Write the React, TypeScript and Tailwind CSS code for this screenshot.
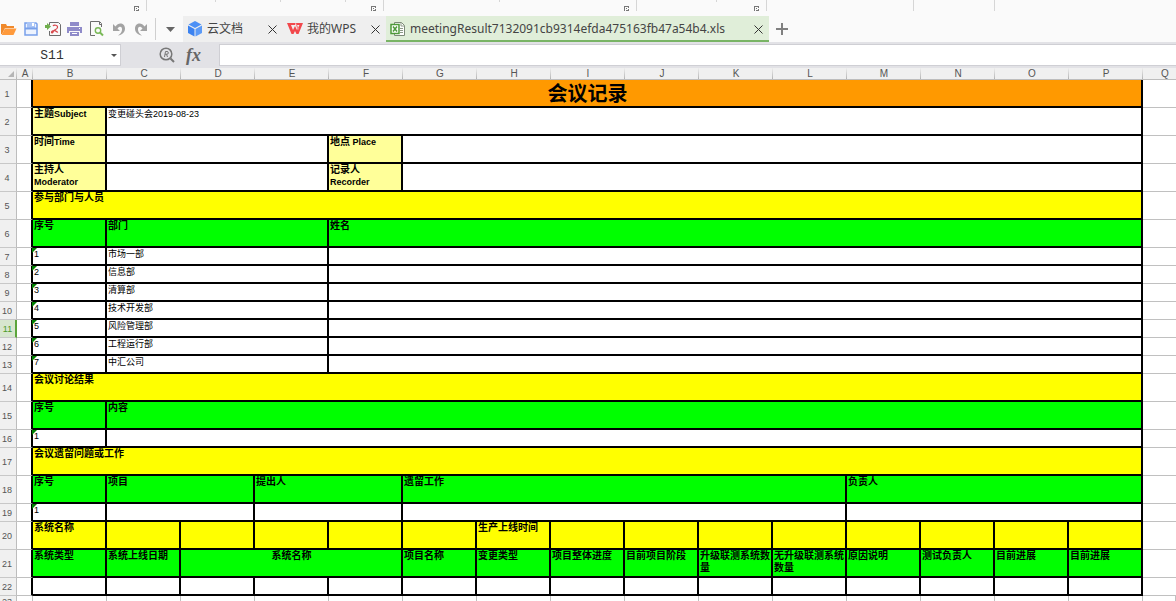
import type { ReactNode } from "react";
import clsx from "clsx";

type Fill = "orange" | "cream" | "yellow" | "green" | "white";

type Cell = {
  span?: number;
  text?: string;
  en?: string;
  fill?: Fill;
  title?: boolean;
  center?: boolean;
  flagged?: boolean;
  stacked?: boolean;
};

type Row = { short?: boolean; cells: Cell[] };

const COLUMNS = "BCDEFGHIJKLMNOP".split("");

const FILLS: Record<Fill, string> = {
  orange: "bg-[#ff9900] font-bold",
  cream: "bg-[#ffff99] font-bold text-[10px]",
  yellow: "bg-[#ffff00] font-bold text-[10px]",
  green: "bg-[#00ff00] font-bold text-[10px]",
  white: "bg-white text-[9px]",
};

const DEPARTMENTS = ["市场一部", "信息部", "清算部", "技术开发部", "风险管理部", "工程运行部", "中汇公司"];

const yellow = (text = ""): Cell => ({ text, fill: "yellow" });
const green = (text: string, span = 1): Cell => ({ text, span, fill: "green" });
const blank = (span = 1): Cell => ({ span });

const ROWS: Row[] = [
  { cells: [{ span: 15, text: "会议记录", fill: "orange", title: true }] },
  { cells: [{ text: "主题", en: "Subject", fill: "cream" }, { span: 14, text: "变更碰头会2019-08-23" }] },
  { cells: [{ text: "时间", en: "Time", fill: "cream" }, blank(3), { text: "地点", en: " Place", fill: "cream" }, blank(10)] },
  {
    cells: [
      { text: "主持人", en: "Moderator", fill: "cream", stacked: true },
      blank(3),
      { text: "记录人", en: "Recorder", fill: "cream", stacked: true },
      blank(10),
    ],
  },
  { cells: [{ span: 15, text: "参与部门与人员", fill: "yellow" }] },
  { cells: [green("序号"), green("部门", 3), green("姓名", 11)] },
  ...DEPARTMENTS.map((name, i) => ({
    short: true,
    cells: [{ text: String(i + 1), flagged: true }, { span: 3, text: name }, blank(11)],
  })),
  { cells: [{ span: 15, text: "会议讨论结果", fill: "yellow" }] },
  { cells: [green("序号"), green("内容", 14)] },
  { short: true, cells: [{ text: "1", flagged: true }, blank(14)] },
  { cells: [{ span: 15, text: "会议遗留问题或工作", fill: "yellow" }] },
  { cells: [green("序号"), green("项目", 2), green("提出人", 2), green("遗留工作", 6), green("负责人", 4)] },
  { short: true, cells: [{ text: "1", flagged: true }, blank(2), blank(2), blank(6), blank(4)] },
  { cells: COLUMNS.map((c) => yellow(c === "B" ? "系统名称" : c === "H" ? "生产上线时间" : "")) },
  {
    cells: [
      green("系统类型"),
      green("系统上线日期"),
      { ...green("系统名称", 3), center: true },
      green("项目名称"),
      green("变更类型"),
      green("项目整体进度"),
      green("目前项目阶段"),
      green("升级联测系统数量"),
      green("无升级联测系统数量"),
      green("原因说明"),
      green("测试负责人"),
      green("目前进展"),
      green("目前进展"),
    ],
  },
  { short: true, cells: COLUMNS.map(() => blank()) },
];

const ACTIVE_ROW = 11;

/* ---------- Ribbon bottom edge ---------- */

const RIBBON_GROUPS = [
  { width: "w-[147px]", ticks: [], launcher: true },
  { width: "w-[237px]", ticks: ["w-[69px]", "w-[65px]", "w-[65px]"], launcher: true },
  { width: "w-[253px]", ticks: ["w-[116px]"], launcher: true },
  { width: "w-[130px]", ticks: ["w-[80px]"], launcher: true },
  { width: "w-[147px]", ticks: [], launcher: false },
  { width: "w-[81px]", ticks: [], launcher: false },
];

function RibbonEdge() {
  return (
    <div className="flex h-4 shrink-0 items-start">
      {RIBBON_GROUPS.map((group, i) => (
        <div key={i} className={clsx("flex h-[11px] shrink-0 border-r border-[#d6d6d6]", group.width)}>
          {group.ticks.map((tick, j) => (
            <div key={j} className={clsx("h-[2px] shrink-0 border-r border-[#d6d6d6]", tick)} />
          ))}
          {group.launcher && (
            <button className="mt-[6px] mr-[7px] ml-auto h-[5px] w-[5px]" aria-label="更多">
              <svg viewBox="0 0 5 5" className="h-[5px] w-[5px]" shapeRendering="crispEdges" fill="#777">
                <path d="M0 0h5v1H1v4H0zM4 1h1v1H4zM2 2h1v1H2zM4 3h1v2H2V4h2z" />
              </svg>
            </button>
          )}
        </div>
      ))}
    </div>
  );
}

/* ---------- Quick access icons ---------- */

function Icon({ children }: { children: ReactNode }) {
  return (
    <svg viewBox="0 0 16 16" className="h-4 w-4" fill="none" aria-hidden="true">
      {children}
    </svg>
  );
}

const TOOLS = [
  {
    label: "打开",
    icon: (
      <Icon>
        <path d="M0 3h5l1 2h7v2H4L1 13H0z" fill="#f0892b" />
        <path d="M4 7.500h11.500L12.500 14H.5z" fill="#ff9a3c" />
      </Icon>
    ),
  },
  {
    label: "保存",
    icon: (
      <Icon>
        <path d="M2 2h11l1 1v11H2z" fill="#edf3fe" stroke="#78a0ea" strokeWidth="1.500" />
        <path d="M4 1h8v6H4z" fill="#a9c4f5" />
        <path d="M2 7.500h12" stroke="#78a0ea" strokeWidth="2" />
        <path d="M9 2h2v3H9z" fill="#fff" />
      </Icon>
    ),
  },
  {
    label: "输出为PDF",
    icon: (
      <Icon>
        <path d="M4.500 4V1.500h9l2 2v11h-11V10" stroke="#6d6d6d" />
        <path d="M0 4h2V2l4 3.500L2 9V7H0z" fill="#6fae4c" />
        <path d="M8 5c1-1.500 5-1 4.500 1.500S9 8.500 8.500 10s-1.500 2.500-2 1.500 1-2 3-1.800 2 1.800 3.500 1.300" stroke="#d8474b" strokeWidth="1.200" />
      </Icon>
    ),
  },
  {
    label: "打印",
    icon: (
      <Icon>
        <path d="M3 1h9v4H3zM0 6h15v6h-2v-2H2v2H0z" fill="#8f8bc9" />
        <path d="M3 11h9v4H3z" fill="#8f8bc9" />
        <path d="M12 7h1v1h-1z" fill="#fff" />
        <path d="M5 12.500h5" stroke="#fff" />
      </Icon>
    ),
  },
  {
    label: "打印预览",
    icon: (
      <Icon>
        <path d="M6 14.500H1.500v-14h9l2 2V6" stroke="#6d6d6d" />
        <path d="M10.500 1v2.500H13" stroke="#6d6d6d" />
        <circle cx="9" cy="9.500" r="2.700" stroke="#79b856" strokeWidth="1.400" />
        <path d="m11 11.500 3 3" stroke="#79b856" strokeWidth="2" />
      </Icon>
    ),
  },
  {
    label: "撤销",
    icon: (
      <Icon>
        <path d="M2 3v7h7L6.500 7.500C8.500 4.500 11.500 5.500 11 9c-.3 2.300-1.500 4-4 5.500C11 14 14 11.500 14 7.500c0-5.500-6.500-7-9.500-2z" fill="#a3a3a3" />
      </Icon>
    ),
  },
  {
    label: "恢复",
    icon: (
      <Icon>
        <path d="M14 3v7H7l2.500-2.500C7.500 4.500 4.500 5.500 5 9c.3 2.300 1.500 4 4 5.500C5 14 2 11.500 2 7.500c0-5.500 6.500-7 9.500-2z" fill="#a3a3a3" />
      </Icon>
    ),
  },
];

function CloseButton({ label }: { label: string }) {
  return (
    <button className="ml-auto h-[9px] w-[9px] shrink-0" aria-label={label}>
      <svg viewBox="0 0 9 9" className="h-[9px] w-[9px]" stroke="#333" fill="none">
        <path d="m.5.5 8 8M8.500.5l-8 8" />
      </svg>
    </button>
  );
}

function TabBar() {
  return (
    <div className="flex h-[26px] shrink-0 items-center">
      <div className="flex items-center gap-[6px] pl-px">
        {TOOLS.map((tool) => (
          <button key={tool.label} aria-label={tool.label}>
            {tool.icon}
          </button>
        ))}
      </div>
      <div className="ml-[6px] h-[22px] w-px shrink-0 bg-[#cfcfcf]" />
      <button className="w-[27px] shrink-0 pt-px pl-[10px]" aria-label="自定义">
        <svg viewBox="0 0 9 5" className="h-[5px] w-[9px]" fill="#666">
          <path d="M0 0h9L4.500 5z" />
        </svg>
      </button>
      <div className="flex h-full min-w-0 font-['Noto_Sans','Noto_Sans_CJK_SC',sans-serif] text-[12px] leading-4 text-[#444]">
        <div className="flex w-[100px] shrink-0 items-center bg-[#efefef] pr-[6px] pl-1">
          <svg viewBox="0 0 16 16" className="mr-1 h-4 w-4" aria-hidden="true">
            <path d="M8 0l6.500 3.500L8 7 1.500 3.500z" fill="#4c90f5" />
            <path d="M1 4.500L7.500 8v7.500L1 12z" fill="#3b82f0" />
            <path d="M15 4.500L8.500 8v7.500L15 12z" fill="#5b9af7" />
          </svg>
          <button>云文档</button>
          <CloseButton label="关闭 云文档" />
        </div>
        <div className="flex w-[103px] shrink-0 items-center bg-[#efefef] pr-[6px] pl-1">
          <svg viewBox="0 0 16 16" className="mr-1 h-4 w-4" aria-hidden="true">
            <path d="M0 2h8v2H4l2 5 2-4 2 4 2.500-5H9V2h7l-4.500 11H9.500L8 10l-1.500 3h-2z" fill="#f2484c" />
            <path d="M8 2h1l3 5.500-1 2z" fill="#f9898b" />
          </svg>
          <button>我的WPS</button>
          <CloseButton label="关闭 我的WPS" />
        </div>
        <div className="flex w-[383px] items-center border-b-2 border-[#79b465] bg-[#e0eed9] pt-[2px] pr-[6px] pl-1">
          <svg viewBox="0 0 16 16" className="mr-1 h-4 w-4 shrink-0" fill="none" aria-hidden="true">
            <path d="M4.500 3V1.500h7l3 3v10h-10V13" fill="#fff" stroke="#7d8a78" />
            <path d="M11 1.500V5h3.500M10 7.500h3M10 9.500h3M10 11.500h3" stroke="#8c9a87" />
            <path d="M1 3.500h8v9H1z" fill="#fff" stroke="#4e9a3a" strokeWidth="1.500" />
            <path d="m3 5.500 4 5M7 5.500l-4 5" stroke="#4e9a3a" strokeWidth="1.500" />
          </svg>
          <button className="whitespace-nowrap">meetingResult7132091cb9314efda475163fb47a54b4.xls</button>
          <CloseButton label="关闭 meetingResult" />
        </div>
      </div>
      <button className="ml-[7px] h-3 w-3 shrink-0" aria-label="新建">
        <svg viewBox="0 0 12 12" className="h-3 w-3" stroke="#808080" strokeWidth="2">
          <path d="M6 0v12M0 6h12" />
        </svg>
      </button>
    </div>
  );
}

function FormulaBar() {
  return (
    <div className="flex h-[26px] shrink-0 items-center bg-[#e2e2e6]">
      <div className="flex h-[22px] w-[121px] shrink-0 items-center border-y border-r border-[#cfcfd4] bg-white">
        <input
          aria-label="名称框"
          className="w-[104px] pt-[2px] text-center font-['Liberation_Mono',monospace] text-[13px] text-[#333] outline-none"
          defaultValue="S11"
        />
        <button className="ml-[7px] flex" aria-label="选择名称">
          <svg viewBox="0 0 6 3" className="h-[3px] w-[6px]" fill="#555">
            <path d="M0 0h6L3 3z" />
          </svg>
        </button>
      </div>
      <div className="flex w-[98px] shrink-0 items-center pl-[38px]">
        <button aria-label="查找">
          <svg viewBox="0 0 16 16" className="h-4 w-4" fill="none" stroke="#777" aria-hidden="true">
            <circle cx="7" cy="7" r="5.800" strokeWidth="1.500" />
            <path d="M5.500 10 6.500 4.500H8a1.300 1.300 0 0 1 0 2.700H6M7.500 7.200 8.500 10" />
            <path d="m11.500 11.500 3.500 3.500" strokeWidth="2" />
          </svg>
        </button>
        <button
          className="ml-[11px] font-['Liberation_Serif',serif] text-[18px] leading-[22px] font-bold text-[#666] italic"
          aria-label="插入函数"
        >
          fx
        </button>
      </div>
      <input
        aria-label="编辑栏"
        className="h-[22px] min-w-0 flex-1 border-y border-l border-[#cfcfd4] bg-white px-1 text-[12px] outline-none"
      />
    </div>
  );
}

/* ---------- Sheet ---------- */

const columnHead =
  "h-3 border-b border-[#bdbdbd] bg-[#f0f0f0] bg-[linear-gradient(to_bottom,#eeeeee,#b4b4b4)] bg-[length:1px_100%] bg-right bg-no-repeat p-0 text-[10px] leading-[11px] font-normal text-[#555]";

function SheetRow({ row, number }: { row: Row; number: number }) {
  const active = number === ACTIVE_ROW;
  return (
    <tr className={row.short ? "h-[18px]" : "h-7"}>
      <th
        scope="row"
        className={clsx(
          "border-b border-b-[#c8c8c8] p-0 text-center text-[9px] font-normal",
          active
            ? "border-r-2 border-r-[#5ba53b] bg-[#d7e6cf] text-[#4c9a2a]"
            : "border-r border-r-[#bdbdbd] bg-[#f0f0f0] pr-[2px] text-[#555]",
        )}
      >
        {number}
      </th>
      <td className="border-r-2 border-b border-r-black border-b-[#c0c0c0] p-0" />
      {row.cells.map((cell, i) => (
        <td
          key={i}
          colSpan={cell.span}
          className={clsx(
            "relative border-r-2 border-b-2 border-black p-0 pl-px",
            FILLS[cell.fill ?? "white"],
            cell.title ? "pt-px text-center align-middle text-[20px] leading-5" : "align-top",
            cell.center && "text-center",
          )}
        >
          {cell.flagged && (
            <svg viewBox="0 0 5 5" className="absolute top-0 -left-px h-[5px] w-[5px]" fill="#008000" aria-hidden="true">
              <path d="M0 0h5L0 5z" />
            </svg>
          )}
          {cell.text}
          {cell.en && <span className={clsx("text-[9px]", cell.stacked && "block")}>{cell.en}</span>}
        </td>
      ))}
      <td className="border-b border-[#c0c0c0] p-0" />
    </tr>
  );
}

function Sheet() {
  return (
    <div className="min-h-0 flex-1 overflow-hidden bg-white">
      <table className="w-full min-w-[1176px] table-fixed border-separate border-spacing-0 font-['Liberation_Sans','Noto_Sans_CJK_SC',sans-serif] leading-3 text-black">
        <colgroup>
          <col className="w-[17px]" />
          <col className="w-4" />
          {COLUMNS.map((c) => (
            <col key={c} className="w-[74px]" />
          ))}
          <col />
        </colgroup>
        <thead>
          <tr>
            <th className={columnHead} aria-label="全选">
              <svg viewBox="0 0 6 6" className="ml-2 h-[6px] w-[6px]" fill="#b5b5b5" aria-hidden="true">
                <path d="M6 0v6H0z" />
              </svg>
            </th>
            <th scope="col" className={columnHead}>A</th>
            {COLUMNS.map((c) => (
              <th key={c} scope="col" className={columnHead}>
                {c}
              </th>
            ))}
            <th scope="col" className="border-b border-[#bdbdbd] bg-[#f0f0f0] p-0 pl-[11px] text-[10px] leading-[11px] font-normal text-[#555]">
              Q
            </th>
          </tr>
        </thead>
        <tbody>
          {ROWS.map((row, i) => (
            <SheetRow key={i} row={row} number={i + 1} />
          ))}
          <tr className="h-[18px]">
            <th scope="row" className="border-r border-b border-[#bdbdbd] bg-[#f0f0f0] p-0 pr-[2px] align-top text-[9px] font-normal text-[#555]">
              {ROWS.length + 1}
            </th>
            {["A", ...COLUMNS, "Q"].map((c) => (
              <td key={c} className="border-r border-b border-[#c0c0c0] p-0" />
            ))}
          </tr>
        </tbody>
      </table>
    </div>
  );
}

export default function App() {
  return (
    <div className="flex h-screen flex-col overflow-hidden bg-[#fafafa]">
      <RibbonEdge />
      <TabBar />
      <FormulaBar />
      <Sheet />
    </div>
  );
}
